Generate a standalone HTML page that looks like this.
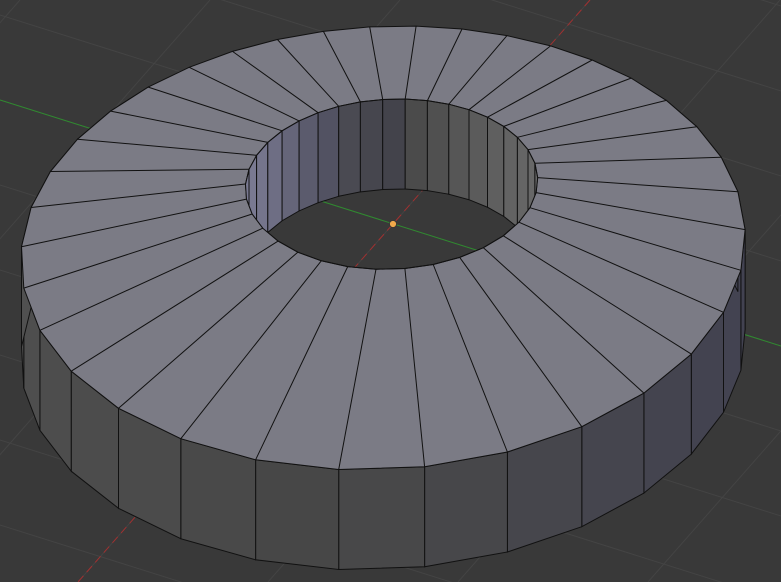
<!DOCTYPE html><html><head><style>html,body{margin:0;padding:0;background:#393939;overflow:hidden;width:781px;height:582px}svg{display:block}</style></head><body>
<svg id="s" width="781" height="582" xmlns="http://www.w3.org/2000/svg"></svg>
<script>
const s=document.getElementById('s');let h='';
const N=36,E=0.3,X0=389,A=345,B=-18,F=181.4,D=147.6,T0=0.05;
const RI=0.425,DU=0.008,DV=-0.04;
const SD=100, FD=90;
function P(r,t,dy){let u=r*Math.cos(t+T0),v=r*Math.sin(t+T0);if(r<1){u+=DU;v+=DV;}const w=1-E*v;return [X0+(A*u+B*v)/w,(D*v+F)/w+(dy||0)];}
function f(a){return a.map(q=>q[0].toFixed(1)+','+q[1].toFixed(1)).join(' ');}
h+='<rect width="781" height="582" fill="#393939"/>';
for(let i=-6;i<=8;i++){h+=`<line x1="-200" y1="${100+i*85-63}" x2="981" y2="${100+i*85+309}" stroke="#444" stroke-width="1"/>`;
h+=`<line x1="${590+i*190}" y1="0" x2="${78+i*190}" y2="582" stroke="#444" stroke-width="1"/>`;}
h+='<line x1="0" y1="100" x2="781" y2="346" stroke="#2f8a2f" stroke-width="1"/>';
h+='<line x1="590" y1="0" x2="78" y2="582" stroke="#a03030" stroke-width="1" stroke-dasharray="8,5"/>';
for(let i=0;i<N;i++){const t1=i*2*Math.PI/N,t2=(i+1)*2*Math.PI/N;
 if(Math.sin(t1+T0)<-0.4&&Math.sin(t2+T0)<-0.4)continue;
 const a=P(1,t1),b=P(1,t2),c=P(1,t2,SD),d=P(1,t1,SD);
 const tm=(t1+t2)/2+T0;let c1=Math.cos(tm);let r,g,bl;
 if(c1<=0){r=Math.round(70-10*c1);g=r;bl=r;}else{r=Math.round(72-6*c1);g=r;bl=Math.round(r+16*c1);}
 h+=`<polygon points="${f([a,b,c,d])}" fill="rgb(${r},${g},${bl})" stroke="#111" stroke-width="1"/>`;}
let path='M';for(let i=0;i<N;i++){path+=f([P(1,i*2*Math.PI/N)])+' L';}path=path.slice(0,-2)+'Z M';
for(let i=0;i<N;i++){path+=f([P(RI,i*2*Math.PI/N)])+' L';}path=path.slice(0,-2)+'Z';
h+=`<path d="${path}" fill="#7b7b85" fill-rule="evenodd" stroke="#111" stroke-width="1"/>`;
for(let i=0;i<N;i++){const t=i*2*Math.PI/N,a=P(1,t),b=P(RI,t);h+=`<line x1="${a[0].toFixed(1)}" y1="${a[1].toFixed(1)}" x2="${b[0].toFixed(1)}" y2="${b[1].toFixed(1)}" stroke="#111" stroke-width="1"/>`;}
let hp='';for(let i=0;i<N;i++)hp+=f([P(RI,i*2*Math.PI/N)])+' ';
h+=`<defs><clipPath id="hc"><polygon points="${hp}"/></clipPath></defs><g clip-path="url(#hc)">`;
for(let i=0;i<N;i++){const t1=i*2*Math.PI/N,t2=(i+1)*2*Math.PI/N;
 if(Math.sin(t1+T0)>0.05&&Math.sin(t2+T0)>0.05)continue;
 const a=P(RI,t1),b=P(RI,t2),c=P(RI,t2,FD),d=P(RI,t1,FD);const tm=(t1+t2)/2+T0,c1=Math.cos(tm);
 let r,g,bl; if(c1<0){r=Math.round(66+(-c1)*(-c1)*56);g=r;bl=Math.round(r+18*(-c1)+6);if(c1>-0.5){r=Math.round(66+(-c1)*20);g=r;bl=r+8;}}
 else{r=Math.round(70+c1*34);g=r;bl=r;}
 h+=`<polygon points="${f([a,b,c,d])}" fill="rgb(${r},${g},${bl})" stroke="#111" stroke-width="1"/>`;}
h+='</g>';
h+=`<polygon points="${hp}" fill="none" stroke="#111" stroke-width="1"/>`;
h+='<circle cx="393" cy="224" r="3.5" fill="#f0a84a" stroke="#333" stroke-width="0.8"/>';
s.innerHTML=h;
</script>
</body></html>
